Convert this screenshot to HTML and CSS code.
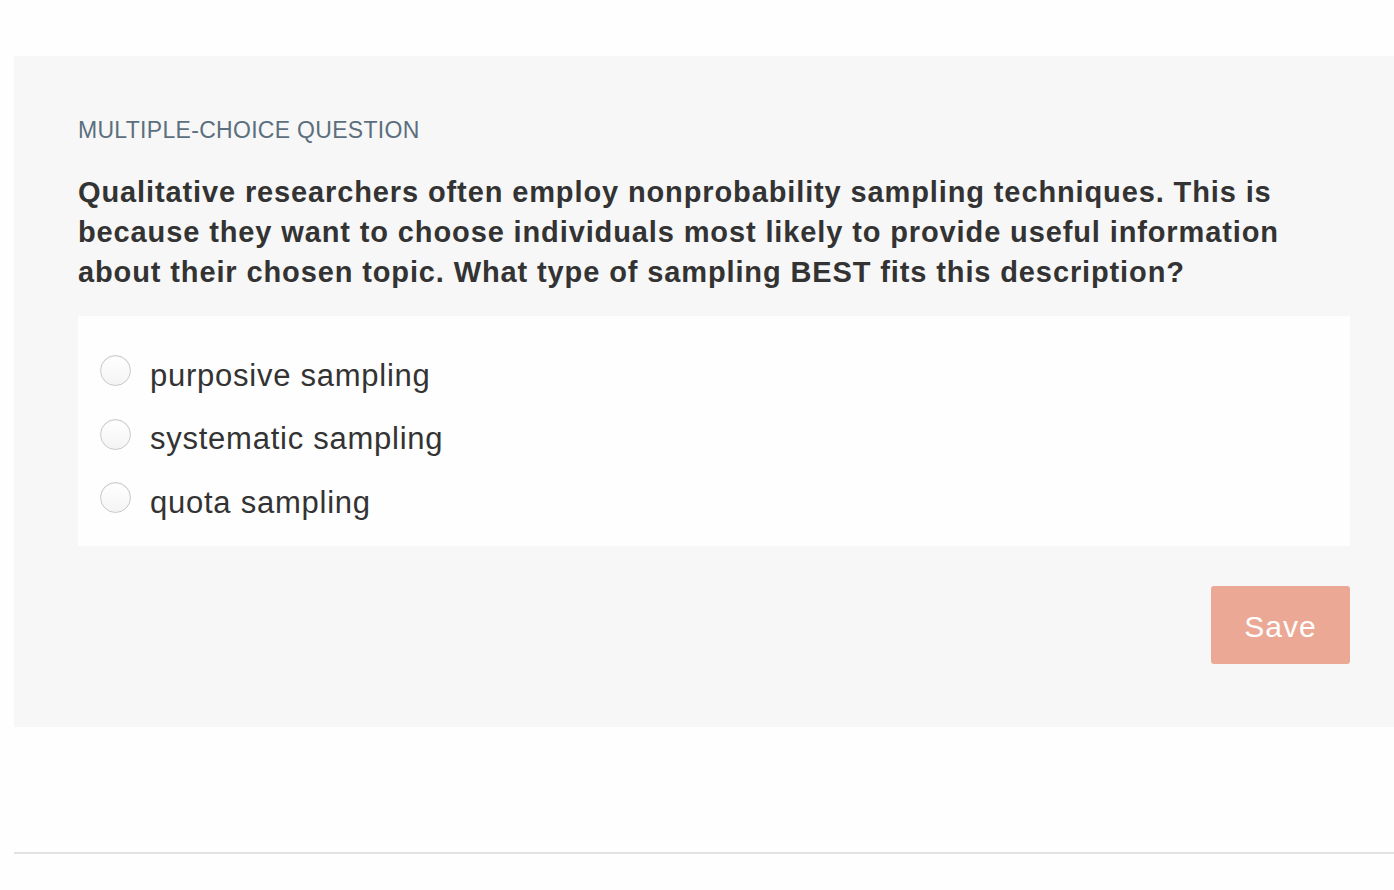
FILE: index.html
```html
<!DOCTYPE html>
<html lang="en">
<head>
<meta charset="utf-8">
<title>Multiple-choice question</title>
<link rel="stylesheet" href="styles.css">
</head>
<body>
<div class="page">
  <section class="panel">
    <div class="kicker">MULTIPLE-CHOICE QUESTION</div>
    <p class="question">Qualitative researchers often employ nonprobability sampling techniques. This is because they want to choose individuals most likely to provide useful information about their chosen topic. What type of sampling BEST fits this description?</p>
    <div class="choices">
      <label class="choice"><span class="radio"></span><span class="choice-text">purposive sampling</span></label>
      <label class="choice"><span class="radio"></span><span class="choice-text">systematic sampling</span></label>
      <label class="choice"><span class="radio"></span><span class="choice-text">quota sampling</span></label>
    </div>
    <div class="actions">
      <button class="save" type="button">Save</button>
    </div>
  </section>
  <div class="footer-rule"></div>
</div>
</body>
</html>
```
FILE: styles.css
```css
html, body {
  margin: 0;
  padding: 0;
  background: #fefefe;
}
body {
  font-family: "Liberation Sans", Arial, Helvetica, sans-serif;
  color: #333;
  overflow: hidden;
}
.page {
  padding: 56px 0 0 14px;
}
.panel {
  background: #f7f7f7;
  height: 671px;
  box-sizing: border-box;
  padding: 60px 44px 0 64px;
}
.kicker {
  font-size: 23px;
  line-height: 28px;
  letter-spacing: 0.3px;
  color: #5c6f7e;
}
.question {
  margin: 28px 0 0;
  font-size: 29px;
  line-height: 40px;
  font-weight: bold;
  letter-spacing: 0.88px;
  color: #333;
}
.choices {
  margin-top: 24px;
  background: #fefefe;
  height: 230px;
  box-sizing: border-box;
  padding: 28px 22px 0;
  display: flex;
  flex-direction: column;
}
.choice {
  display: flex;
  align-items: center;
  height: 63.5px;
}
.radio {
  width: 31px;
  height: 31px;
  box-sizing: border-box;
  border-radius: 50%;
  border: 1px solid #c9c9c9;
  background: linear-gradient(#ffffff, #f4f4f4);
  box-shadow: inset 0 1px 1px rgba(0,0,0,0.06);
  margin-right: 19px;
  margin-top: -10px;
  flex: none;
}
.choice-text {
  font-size: 31px;
  letter-spacing: 0.75px;
  color: #333;
}
.actions {
  display: flex;
  justify-content: flex-end;
  margin-top: 40px;
}
.save {
  width: 139px;
  height: 78px;
  border: none;
  border-radius: 3px;
  background: #eba894;
  color: #fff;
  font-family: "Liberation Sans", Arial, Helvetica, sans-serif;
  font-size: 30px;
  letter-spacing: 1px;
  padding: 3px 0 0;
}
.footer-rule {
  margin-top: 125px;
  height: 2px;
  background: #e2e2e2;
}
```
